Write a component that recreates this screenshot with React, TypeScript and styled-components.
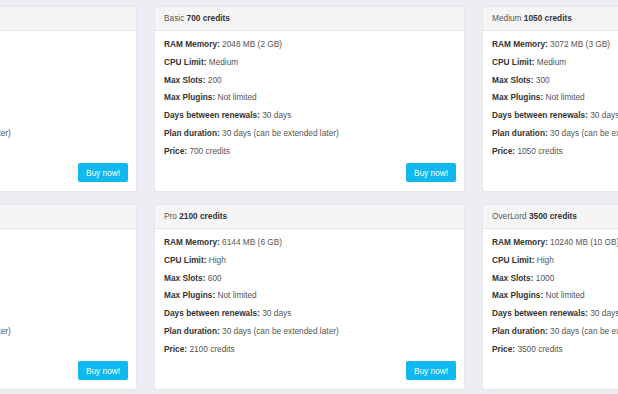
import React from "react";
import styled, { createGlobalStyle } from "styled-components";

const Global = createGlobalStyle`
  html, body {
    margin: 0;
    padding: 0;
    background: #eceef3;
    overflow: hidden;
  }
  body {
    font-family: "Liberation Sans", Arial, sans-serif;
  }
`;

const Page = styled.div`
  width: 618px;
  height: 394px;
  overflow: hidden;
  background: #eceef3;
`;

const Grid = styled.div`
  display: grid;
  grid-template-columns: repeat(3, 309px);
  column-gap: 19px;
  row-gap: 14px;
  padding-top: 7px;
  margin-left: -173px;
  width: max-content;
`;

const Card = styled.div`
  background: #ffffff;
  border-radius: 2px;
  box-shadow: 0 0 0 1px #e6e8ec, 0 1px 2px rgba(0, 0, 0, 0.05);
  height: 184px;
  display: flex;
  flex-direction: column;
  overflow: hidden;
`;

const Header = styled.div`
  height: 23px;
  line-height: 23px;
  padding: 0 9px;
  background: #f5f5f5;
  border-bottom: 1px solid #e4e4e4;
  font-size: 8.3px;
  color: #555;
  white-space: nowrap;
`;

const Strong = styled.b`
  color: #333;
  font-weight: bold;
`;

const Body = styled.div`
  flex: 1;
  display: flex;
  flex-direction: column;
  padding: 5.3px 8px 9px 9px;
`;

const Line = styled.div`
  font-size: 8.3px;
  line-height: 17.7px;
  color: #555;
  white-space: nowrap;
`;

const Label = styled.b`
  color: #333;
  font-weight: bold;
`;

const Footer = styled.div`
  margin-top: auto;
  display: flex;
  justify-content: flex-end;
`;

const BuyButton = styled.button`
  width: 50px;
  height: 19px;
  border: none;
  border-radius: 2px;
  background: #0fb8ee;
  color: #ffffff;
  font-family: "Liberation Sans", Arial, sans-serif;
  font-size: 8.3px;
  padding: 0;
  cursor: pointer;
`;

type Plan = {
  name: string;
  credits: number;
  ram: number;
  cpu: string;
  slots: number;
};

const plans: Plan[] = [
  { name: "Starter", credits: 350, ram: 1024, cpu: "Low", slots: 100 },
  { name: "Basic", credits: 700, ram: 2048, cpu: "Medium", slots: 200 },
  { name: "Medium", credits: 1050, ram: 3072, cpu: "Medium", slots: 300 },
  { name: "Advanced", credits: 1400, ram: 4096, cpu: "High", slots: 400 },
  { name: "Pro", credits: 2100, ram: 6144, cpu: "High", slots: 600 },
  { name: "OverLord", credits: 3500, ram: 10240, cpu: "High", slots: 1000 },
];

function PlanCard({ plan }: { plan: Plan }) {
  return (
    <Card>
      <Header>
        {plan.name} <Strong>{plan.credits} credits</Strong>
      </Header>
      <Body>
        <Line>
          <Label>RAM Memory:</Label> {plan.ram} MB ({plan.ram / 1024} GB)
        </Line>
        <Line>
          <Label>CPU Limit:</Label> {plan.cpu}
        </Line>
        <Line>
          <Label>Max Slots:</Label> {plan.slots}
        </Line>
        <Line>
          <Label>Max Plugins:</Label> Not limited
        </Line>
        <Line>
          <Label>Days between renewals:</Label> 30 days
        </Line>
        <Line>
          <Label>Plan duration:</Label> 30 days (can be extended later)
        </Line>
        <Line>
          <Label>Price:</Label> {plan.credits} credits
        </Line>
        <Footer>
          <BuyButton>Buy now!</BuyButton>
        </Footer>
      </Body>
    </Card>
  );
}

export default function App() {
  return (
    <Page>
      <Global />
      <Grid>
        {plans.map((p) => (
          <PlanCard key={p.name} plan={p} />
        ))}
      </Grid>
    </Page>
  );
}
